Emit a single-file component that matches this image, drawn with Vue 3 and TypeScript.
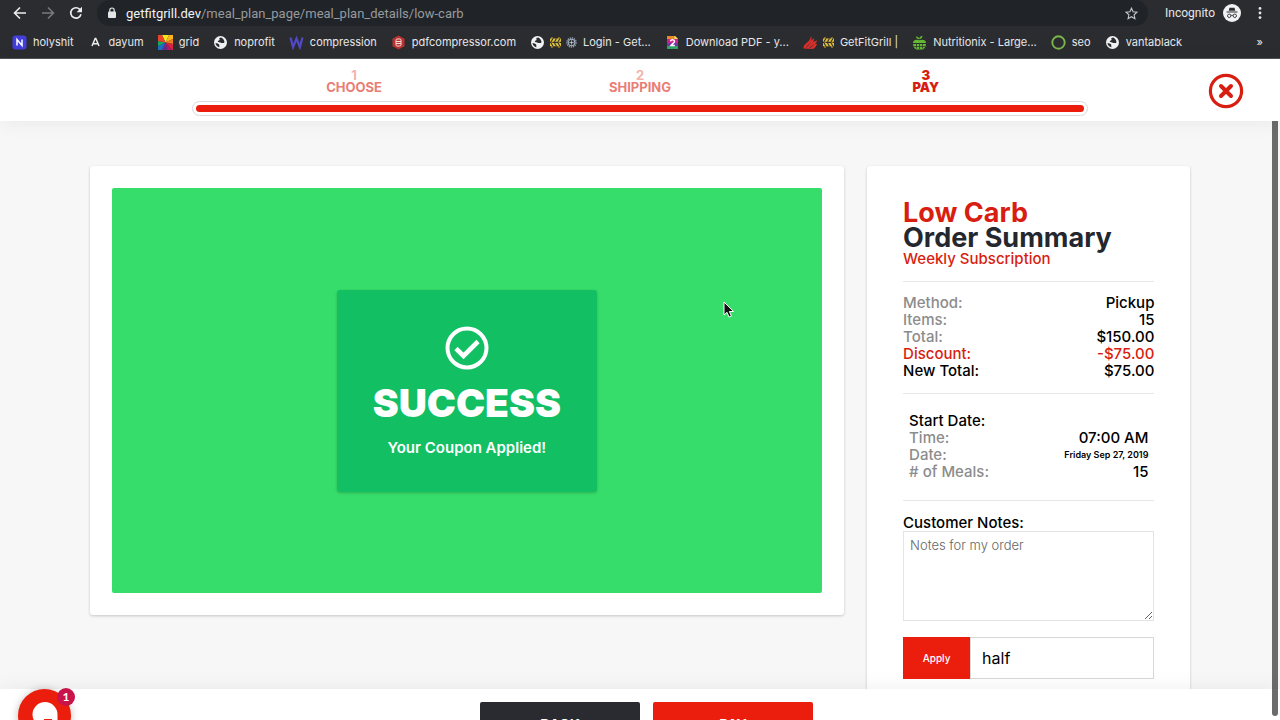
<script setup lang="ts">
import { ref } from 'vue'

interface Bookmark {
  icon: string
  label: string
  signs?: string[]
}

const bookmarks: Bookmark[] = [
  { icon: 'n', label: 'holyshit' },
  { icon: 'a', label: 'dayum' },
  { icon: 'wheel', label: 'grid' },
  { icon: 'globe', label: 'noprofit' },
  { icon: 'w', label: 'compression' },
  { icon: 'hex', label: 'pdfcompressor.com' },
  { icon: 'globe', label: 'Login - Get...', signs: ['barrier', 'gear'] },
  { icon: 'two', label: 'Download PDF - y...' },
  { icon: 'flame', label: 'GetFitGrill |', signs: ['barrier'] },
  { icon: 'apple', label: 'Nutritionix - Large...' },
  { icon: 'ring', label: 'seo' },
  { icon: 'globe', label: 'vantablack' },
]

const wedges = [
  { color: '#f6e51f', d: 'M7.5 7.5 4 0h7z' },
  { color: '#f9b51b', d: 'M7.5 7.5 11 0h4v4z' },
  { color: '#ee7a22', d: 'M7.5 7.5 15 4v5z' },
  { color: '#d7263d', d: 'M7.5 7.5 15 9v6h-1z' },
  { color: '#b01a6e', d: 'M7.5 7.5 14 15H9z' },
  { color: '#6a2c91', d: 'M7.5 7.5 9 15H4z' },
  { color: '#1d6fc0', d: 'M7.5 7.5 4 15H0v-4z' },
  { color: '#1ba65a', d: 'M7.5 7.5 0 11V6z' },
  { color: '#e8452c', d: 'M7.5 7.5 0 6V0h4z' },
]

const steps = [
  { number: 1, name: 'CHOOSE', active: false },
  { number: 2, name: 'SHIPPING', active: false },
  { number: 3, name: 'PAY', active: true },
]

const totals = [
  { label: 'Method:', value: 'Pickup', tone: '' },
  { label: 'Items:', value: '15', tone: '' },
  { label: 'Total:', value: '$150.00', tone: '' },
  { label: 'Discount:', value: '-$75.00', tone: 'red' },
  { label: 'New Total:', value: '$75.00', tone: 'dark' },
]

const schedule = [
  { label: 'Time:', value: '07:00 AM', small: false },
  { label: 'Date:', value: 'Friday Sep 27, 2019', small: true },
  { label: '# of Meals:', value: '15', small: false },
]

const notes = ref('')
const coupon = ref('half')
</script>

<template>
  <div class="window">
    <div class="chrome">
      <div class="toolbar">
        <button class="tool" aria-label="Back">
          <svg width="14" height="14" viewBox="0 0 14 14"><path d="M13 7H2M7 1.5 1.5 7 7 12.5" fill="none" stroke="#eceded" stroke-width="1.6" /></svg>
        </button>
        <button class="tool" aria-label="Forward">
          <svg width="14" height="14" viewBox="0 0 14 14"><path d="M1 7h11M7 1.5 12.5 7 7 12.5" fill="none" stroke="#77797d" stroke-width="1.6" /></svg>
        </button>
        <button class="tool" aria-label="Reload">
          <svg width="14" height="14" viewBox="0 0 14 14"><path d="M12 8.3A5.2 5.2 0 1 1 10.8 3.4L12 4.6" fill="none" stroke="#eceded" stroke-width="1.7" /><path d="M13 .8v5.4H7.6z" fill="#eceded" /></svg>
        </button>
        <div class="address">
          <svg width="10" height="12" viewBox="0 0 10 12"><rect x="1" y="4.5" width="8" height="6.5" rx="1" fill="#e3e4e5" /><path d="M2.8 5V3.2a2.2 2.2 0 0 1 4.4 0V5" fill="none" stroke="#e3e4e5" stroke-width="1.2" /></svg>
          <span class="url"><b>getfitgrill.dev</b>/meal_plan_page/meal_plan_details/low-carb</span>
          <svg width="13" height="13" viewBox="0 0 13 13"><path d="m6.5 1.2 1.6 3.6 3.9.4-2.9 2.6.8 3.9-3.4-2-3.4 2 .8-3.9L1 5.2l3.9-.4z" fill="none" stroke="#c5c7c9" stroke-width="1.1" /></svg>
        </div>
        <span class="incognito">Incognito</span>
        <svg width="18" height="18" viewBox="0 0 18 18">
          <circle cx="9" cy="9" r="9" fill="#f1f2f3" />
          <path d="M6.5 3.7h5l.8 3H5.7zM3.5 7.5h11v1.1h-11z" fill="#2b2c30" />
          <circle cx="6.2" cy="11.8" r="1.7" fill="none" stroke="#2b2c30" stroke-width=".9" />
          <circle cx="11.8" cy="11.8" r="1.7" fill="none" stroke="#2b2c30" stroke-width=".9" />
          <path d="M7.9 11.5q1.1-.6 2.2 0" fill="none" stroke="#2b2c30" stroke-width=".8" />
        </svg>
        <button class="tool menu" aria-label="Menu">
          <svg width="4" height="14" viewBox="0 0 4 14"><circle cx="2" cy="2.4" r="1.4" fill="#e6e7e8" /><circle cx="2" cy="7" r="1.4" fill="#e6e7e8" /><circle cx="2" cy="11.6" r="1.4" fill="#e6e7e8" /></svg>
        </button>
      </div>

      <nav class="bookmarks">
        <a v-for="mark in bookmarks" :key="mark.label" href="#" class="bookmark">
          <svg width="15" height="15" viewBox="0 0 15 15">
            <template v-if="mark.icon === 'n'">
              <rect x=".5" y=".5" width="14" height="14" rx="3" fill="#423edc" />
              <path d="M5 10.5v-6l5 6v-6" fill="none" stroke="#fff" stroke-width="1.5" />
            </template>
            <path v-else-if="mark.icon === 'a'" d="m4 11 3.2-7.5h.6L11 11M5.2 8.7h4.6" fill="none" stroke="#eceded" stroke-width="1.5" />
            <template v-else-if="mark.icon === 'wheel'">
              <path v-for="w in wedges" :key="w.color" :d="w.d" :fill="w.color" />
            </template>
            <template v-else-if="mark.icon === 'globe'">
              <circle cx="7.5" cy="7.5" r="6.5" fill="#f0f1f2" />
              <path d="M8.2 2.4c-1.7 0-2.3 1-1.7 1.9.6.8-.6 1.2-1.5 1.7-.7.5 0 1.2 1.2 1.2 1.4.1 1.8.8 3 .8 1.4 0 2.4.3 2.2-1.3-.1-1.6-1.5-3.8-3.2-4.3zM2.5 8c1.4.4 3.2.5 3.7 1.6.3.8-.2 1.3.3 2.7-2.2-.5-3.9-2.1-4-4.3z" fill="#2b2c30" />
            </template>
            <path v-else-if="mark.icon === 'w'" d="m1.5 2.5 2.6 9.5 3.4-8.5 3.4 8.5 2.6-9.5" fill="none" stroke="#5148c4" stroke-width="2.3" />
            <template v-else-if="mark.icon === 'hex'">
              <path d="m7.5.5 6 3.3v7.4l-6 3.3-6-3.3V3.8z" fill="#b9322f" />
              <rect x="5" y="4" width="5" height="7" rx="1.2" fill="none" stroke="#f5dcdb" />
              <path d="M5 6.5h5M5 8.5h5" stroke="#f5dcdb" />
            </template>
            <template v-else-if="mark.icon === 'two'">
              <path d="M2 1h8l3 3v3H2z" fill="#e58a25" /><path d="M9.5 1h.5l3 3H9.5z" fill="#f7e36b" />
              <path d="M2 4h11v4H2z" fill="#c9258b" /><path d="M2 8h11v3H2z" fill="#7435a8" /><path d="M2 11h11v3H2z" fill="#35a267" />
              <path d="M5.5 6.2c.5-2 4-1.7 4 .2 0 1.5-2.5 2.4-3.6 4.2h3.9" fill="none" stroke="#fff" stroke-width="1.5" />
            </template>
            <template v-else-if="mark.icon === 'flame'">
              <path d="M.5 13.500C0 11 1.500 9.500 3.500 8c2-1.500 4-3.500 4.500-7 1 1.500.8 3-.2 4.500 1.500-.7 2.700-1.500 3.200-2.500.3 1.600-.2 2.800-1.200 3.900 1.500-.3 3-.8 4.200-1.700-.2 1.800-1 3-2 3.800l2-.2c-.5 2-1.800 4-4 5.200z" fill="#d7302b" />
              <path d="M3.500 12.500c1-2 2.500-3 4-4.500M7 13c.8-1.500 2-2.500 3.500-3.500" fill="none" stroke="#2b2c30" stroke-width=".7" />
            </template>
            <template v-else-if="mark.icon === 'apple'">
              <path d="M7.2 4.2C7 2.5 6 1.5 4 1.5c0 1.7 1.500 2.7 3.2 2.7 0-2 1-3 3.3-3.5-.1 2-1 3-2.6 3.4z" fill="#64b832" />
              <path d="M1 8c0-3 3.5-4 6.5-2.700C10.500 4 14 5 14 8z" fill="#64b832" />
              <path d="M1 9h13c-.3 3-2 5.500-4 5.500H5C3 14.500 1.300 12 1 9z" fill="#64b832" />
              <path d="M4.500 8v5.500M7.500 8v6M10.500 8v5.500M2 11.500h11" stroke="#2b2c30" stroke-width=".7" />
            </template>
            <circle v-else cx="7.5" cy="7.5" r="6.2" fill="none" stroke="#7ab648" stroke-width="1.9" />
          </svg>
          <svg v-for="sign in mark.signs" :key="sign" width="11" height="11" viewBox="0 0 11 11">
            <template v-if="sign === 'barrier'">
              <path d="M2 0v11M9 0v11" stroke="#a7841b" stroke-width="1.4" />
              <path d="M0 1.5h11v3.2H0zM0 6h11v3.2H0z" fill="#e2c238" />
              <path d="m1 4.7 2-3.2M4.5 4.7l2-3.2M8 4.7l2-3.2M3 9.2 1 6M6.5 9.2l-2-3.200M10 9.2 8 6" stroke="#2b2c30" stroke-width="1.1" />
            </template>
            <template v-else>
              <circle cx="5.5" cy="5.5" r="4.5" fill="none" stroke="#8d9aaa" stroke-width="1.6" stroke-dasharray="1.3 .8" />
              <circle cx="5.5" cy="5.5" r="3.2" fill="none" stroke="#a6b2c0" stroke-width="1.1" />
              <path d="M5.5 2v7M2 5.5h7" stroke="#8d9aaa" stroke-width=".8" />
              <circle cx="5.5" cy="5.5" r="1" fill="#c3ccd6" />
            </template>
          </svg>
          <span>{{ mark.label }}</span>
        </a>
        <button class="more" aria-label="More bookmarks">»</button>
      </nav>
    </div>

    <header class="progress-header">
      <ol class="steps">
        <li v-for="step in steps" :key="step.name" :class="{ active: step.active }">
          <span class="step-number">{{ step.number }}</span>
          <span>{{ step.name }}</span>
        </li>
      </ol>
      <div class="track"><div class="bar"></div></div>
      <button class="close" aria-label="Close">
        <svg width="36" height="36" viewBox="0 0 36 36">
          <circle cx="18" cy="18" r="15.6" fill="none" stroke="#d81e10" stroke-width="3.2" />
          <path d="m13 13 10 10M23 13 13 23" stroke="#d81e10" stroke-width="4" stroke-linecap="round" />
        </svg>
      </button>
    </header>

    <main class="content">
      <section class="payment">
        <div class="result">
          <div class="notice">
            <svg width="44" height="44" viewBox="0 0 44 44">
              <circle cx="22" cy="22" r="19.5" fill="none" stroke="#fff" stroke-width="4" />
              <path d="m11 22.5 7.5 7.5L33 15.5" fill="none" stroke="#fff" stroke-width="4.6" />
            </svg>
            <h2>SUCCESS</h2>
            <p>Your Coupon Applied!</p>
          </div>
        </div>
        <svg class="pointer" width="12" height="18" viewBox="0 0 12 18"><path d="M1 1v13l3-2.7 2 4.8 2.4-1L6.4 10.5h4.2z" fill="#111" stroke="#fff" /></svg>
      </section>

      <aside class="summary">
        <h1><span>Low Carb</span>Order Summary</h1>
        <p class="plan">Weekly Subscription</p>
        <dl class="rows totals">
          <div v-for="row in totals" :key="row.label" :class="row.tone">
            <dt>{{ row.label }}</dt><dd>{{ row.value }}</dd>
          </div>
        </dl>
        <section class="schedule">
          <h3>Start Date:</h3>
          <dl class="rows">
            <div v-for="row in schedule" :key="row.label">
              <dt>{{ row.label }}</dt><dd :class="{ small: row.small }">{{ row.value }}</dd>
            </div>
          </dl>
        </section>
        <label class="notes-label" for="notes">Customer Notes:</label>
        <textarea id="notes" v-model="notes" placeholder="Notes for my order"></textarea>
        <form class="coupon" @submit.prevent>
          <button type="submit">Apply</button>
          <input v-model="coupon" type="text" aria-label="Coupon code" />
        </form>
      </aside>
      <div class="scrollbar"></div>
    </main>

    <footer class="actions">
      <div class="action-row">
        <button class="back">BACK</button>
        <button class="pay">PAY</button>
      </div>
    </footer>

    <button class="chat" aria-label="Open chat, 1 unread message">
      <svg width="28" height="28" viewBox="0 0 28 28"><path d="M14 0a12.5 12.5 0 1 0 0 25h12.5V12.5A12.5 12.5 0 0 0 14 0z" fill="#fff" /><path d="M13 18h8" stroke="#e9200f" stroke-width="2" /></svg>
      <span class="unread">1</span>
    </button>
  </div>
</template>

<style>
body {
  margin: 0;
  overflow: hidden;
}
</style>

<style scoped>
* {
  box-sizing: border-box;
}

.window {
  position: relative;
  display: flex;
  flex-direction: column;
  height: 100vh;
  overflow: hidden;
  background: #f7f7f7;
  color: #000;
  font-family: Inter, "Open Sans", sans-serif;
  font-size: 15px;
  line-height: 17px;
}

button {
  border: 0;
  padding: 0;
  background: none;
  font: inherit;
  color: inherit;
}

svg {
  flex: none;
  display: block;
}

h1, h2, h3, p, dl, dd, ol {
  margin: 0;
  padding: 0;
}

.chrome {
  background: #2b2c30;
  border-bottom: 1px solid #515256;
  color: #e6e7e8;
  font-family: Roboto, sans-serif;
}

.toolbar {
  display: flex;
  align-items: center;
  padding: 0 18px 0 13px;
  height: 26px;
}

.tool {
  margin-right: 14px;
}

.tool.menu {
  margin: 0 0 0 17px;
}

.address {
  flex: 1;
  display: flex;
  align-items: center;
  gap: 9px;
  height: 26px;
  margin: 0 17px 0 0;
  padding: 0 10px;
  border-radius: 13px;
  background: #202428;
}

.url {
  flex: 1;
  color: #979a9e;
  font-size: 13px;
}

.url b {
  color: #f1f2f3;
  font-weight: 400;
}

.incognito {
  margin-right: 8px;
  font-size: 12px;
}

.bookmarks {
  display: flex;
  align-items: center;
  gap: 14px;
  height: 32px;
  padding: 0 17px 0 12px;
  font-family: Inter, sans-serif;
  font-size: 11px;
  white-space: nowrap;
}

.bookmark {
  display: flex;
  align-items: center;
  gap: 5px;
  color: inherit;
  text-decoration: none;
}

.bookmark span {
  padding-left: 1px;
}

.more {
  margin-left: auto;
}

.progress-header {
  position: relative;
  z-index: 1;
  height: 62px;
  padding-top: 10px;
  background: #fff;
  box-shadow: 0 2px 20px rgba(0, 0, 0, 0.06);
}

.steps {
  display: grid;
  grid-template-columns: repeat(3, 1fr);
  width: 67%;
  margin: 0 auto;
  list-style: none;
  color: #e97e75;
  font-size: 13px;
  font-weight: 700;
  line-height: 12px;
  text-align: center;
}

.steps li {
  display: grid;
}

.step-number {
  color: #f4b2ad;
}

.steps .active,
.active .step-number {
  color: #d81e10;
  font-weight: 900;
}

.track {
  width: 70%;
  margin: 8px auto 0;
  padding: 3px;
  border: 1px solid #d9d9de;
  border-radius: 8px;
}

.bar {
  height: 7px;
  border-radius: 4px;
  background: #eb1e0d;
}

.close {
  position: absolute;
  top: 14px;
  right: 36px;
}

.content {
  position: relative;
  flex: 1;
  min-height: 0;
  display: grid;
  grid-template-columns: minmax(0, 7fr) minmax(0, 3fr);
  align-items: start;
  gap: 23px;
  padding: 45px 7% 0;
  overflow: hidden;
}

.payment,
.summary {
  border-radius: 3px;
  background: #fff;
  box-shadow: 0 1px 3px rgba(0, 0, 0, 0.2);
}

.payment {
  position: relative;
  padding: 22px;
}

.result {
  display: flex;
  align-items: center;
  justify-content: center;
  min-height: 405px;
  border-radius: 2px;
  background: #37dd6a;
}

.notice {
  display: flex;
  flex-direction: column;
  align-items: center;
  padding: 36px;
  border-radius: 3px;
  background: #12bf63;
  box-shadow: 0 1px 3px rgba(0, 0, 0, 0.2);
  color: #fff;
}

.notice h2 {
  margin-top: 15px;
  font-size: 39px;
  font-weight: 900;
  line-height: 36px;
}

.notice p {
  margin-top: 18px;
  font-weight: 600;
}

.pointer {
  position: absolute;
  left: 84%;
  top: 30%;
}

.summary {
  padding: 34px 36px 36px;
  font-weight: 500;
}

.summary h1 {
  display: grid;
  color: #25272e;
  font-size: 27px;
  font-weight: 700;
  line-height: 25px;
}

.summary h1 span,
.plan {
  color: #d81e10;
}

.totals {
  margin-top: 14px;
  padding: 12px 0 14px;
  border-top: 1px solid #e7e7e7;
  border-bottom: 1px solid #e7e7e7;
}

.rows div {
  display: flex;
  justify-content: space-between;
}

.rows dt {
  color: #8c8c8c;
}

.rows .dark dt {
  color: #000;
}

.rows .red dt,
.rows .red dd {
  color: #d81e10;
}

.rows .small {
  font-size: 9px;
  font-weight: 600;
}

.schedule {
  padding: 18px 6px 20px;
  border-bottom: 1px solid #e7e7e7;
}

.schedule h3 {
  font: inherit;
}

.notes-label {
  display: block;
  margin-top: 13px;
}

textarea {
  display: block;
  width: 100%;
  height: 90px;
  padding: 5px 6px;
  border: 1px solid #e4e4e4;
  font: 300 13px/17px Inter, sans-serif;
}

textarea::placeholder {
  color: #666;
}

.coupon {
  display: flex;
  margin-top: 16px;
}

.coupon button {
  flex: none;
  width: 67px;
  background: #eb1e0d;
  color: #fff;
  font-size: 10px;
}

.coupon input {
  flex: 1;
  min-width: 0;
  height: 42px;
  padding: 0 11px;
  border: 1px solid #d8d8d8;
  font: 400 16px/20px Inter, sans-serif;
}

.scrollbar {
  position: absolute;
  top: 0;
  right: 2px;
  bottom: 0;
  width: 6px;
  background: #6b6b6b;
}

.actions {
  position: relative;
  z-index: 1;
  flex: none;
  height: 31px;
  background: #fff;
  box-shadow: 0 -2px 20px rgba(0, 0, 0, 0.06);
}

.actions::after {
  content: "";
  position: absolute;
  top: 0;
  right: 2px;
  width: 6px;
  height: 27px;
  border-radius: 0 0 3px 3px;
  background: #6b6b6b;
}

.action-row {
  display: flex;
  justify-content: center;
  gap: 13px;
  padding: 13px 0 0 13px;
}

.action-row button {
  flex: none;
  width: 160px;
  height: 45px;
  border-radius: 2px;
  color: #fff;
  font-size: 14px;
  font-weight: 700;
}

.action-row .back {
  background: #292b30;
}

.action-row .pay {
  background: #eb1e0d;
}

.chat {
  position: absolute;
  z-index: 2;
  left: 18px;
  bottom: -22px;
  display: grid;
  place-items: center;
  width: 53px;
  height: 53px;
  border-radius: 50%;
  background: #eb1e0d;
  box-shadow: 0 1px 8px rgba(0, 0, 0, 0.25);
}

.unread {
  position: absolute;
  top: -1px;
  right: -4px;
  width: 18px;
  border-radius: 9px;
  background: #c8144b;
  color: #fff;
  font: 700 12px/18px Lato, sans-serif;
  text-align: center;
}
</style>
